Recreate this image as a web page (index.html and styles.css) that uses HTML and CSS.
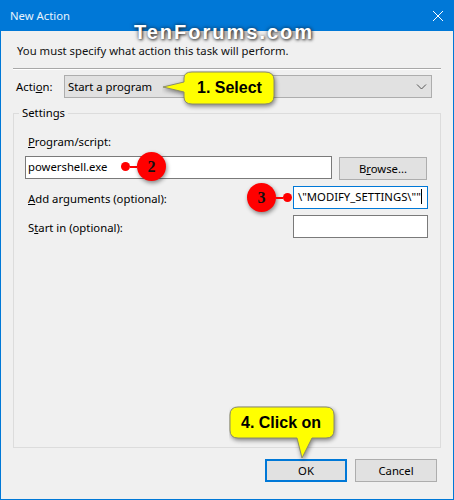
FILE: index.html
```html
<!DOCTYPE html>
<html lang="en">
<head>
  <meta charset="UTF-8" />
  <title>New Action</title>
  <link rel="stylesheet" href="styles.css">
</head>
<body>
  <div class="window">
    <div class="titlebar">
      <span>New Action</span>
      <svg class="close" width="12" height="12" viewBox="0 0 12 12"><path d="M1 1 L11 11 M11 1 L1 11" stroke="#fff" stroke-width="1" fill="none"/></svg>
    </div>

    <div class="content">
      <p class="intro">You must specify what action this task will perform.</p>
      <div class="separator"></div>

      <div class="action-row">
        <label>Acti<u>o</u>n:</label>
        <div class="select">
          <span>Start a program</span>
          <svg width="11" height="6" viewBox="0 0 11 6"><path d="M1 0.5 L5.5 5 L10 0.5" stroke="#555" stroke-width="1" fill="none"/></svg>
        </div>
      </div>

      <fieldset class="settings">
        <legend>Settings</legend>
        <label class="label-program"><u>P</u>rogram/script:</label>
        <div class="program-row">
          <div class="field field-program">powershell.exe</div>
          <button type="button" class="btn btn-browse">B<u>r</u>owse...</button>
        </div>
        <div class="arg-row">
          <label><u>A</u>dd arguments (optional):</label>
          <div class="field field-short field-focus"><span class="caret">\"MODIFY_SETTINGS\""</span></div>
        </div>
        <div class="arg-row">
          <label>S<u>t</u>art in (optional):</label>
          <div class="field field-short"></div>
        </div>
      </fieldset>

      <div class="buttons">
        <button type="button" class="btn btn-ok">OK</button>
        <button type="button" class="btn">Cancel</button>
      </div>
    </div>
  </div>

  <!-- Annotations on top of the dialog -->
  <div class="watermark">TenForums.com</div>

  <div class="callout callout-select">
    <svg width="122" height="42" viewBox="0 0 122 42"><path class="bubble" d="M22 7 Q22 1 30 1 L103 1 Q112 1 112 9 L112 25 Q112 33 103 33 L30 33 Q22 33 22 26 L22 21 L1 16 L22 11 Z"/></svg>
    <span>1. Select</span>
  </div>

  <div class="callout callout-click">
    <svg width="116" height="64" viewBox="0 0 116 64"><path class="bubble" d="M9 1 L97 1 Q105 1 105 9 L105 24 Q105 32 97 32 L83 32 L73 52 L68 32 L9 32 Q1 32 1 24 L1 9 Q1 1 9 1 Z"/></svg>
    <span>4. Click on</span>
  </div>

  <div class="pin pin-two">
    <i class="pin-dot"></i><i class="pin-line"></i><b class="pin-circle">2</b>
  </div>
  <div class="pin pin-three">
    <b class="pin-circle">3</b><i class="pin-line"></i><i class="pin-dot"></i>
  </div>
</body>
</html>
```

FILE: styles.css
```css
* {
  box-sizing: border-box;
  margin: 0;
  padding: 0;
}

body {
  width: 454px;
  height: 500px;
  position: relative;
  overflow: hidden;
  font-family: "Noto Sans", sans-serif;
  font-size: 11.3px;
  color: #000;
  background: #f0f0f0;
}

.window {
  height: 500px;
  display: flex;
  flex-direction: column;
  border: 1px solid #0078d7;
  border-top: none;
}

.titlebar {
  height: 31px;
  flex: none;
  display: flex;
  align-items: center;
  justify-content: space-between;
  padding: 0 9px 0 9px;
  background: #0078d7;
  color: #e8f3fc;
}

.content {
  flex: 1;
  padding: 0 12px;
  display: flex;
  flex-direction: column;
}

.intro {
  margin: 10px 0 0 4px;
  height: 20px;
  line-height: 20px;
  color: #111;
}

.separator {
  margin-top: 7px;
  background: #a8a8a8;
  border-bottom: 1px solid #fff;
  height: 2px;
}

.action-row {
  display: flex;
  align-items: center;
  margin: 5px 0 0 3px;
  height: 23px;
}

.action-row label {
  width: 48px;
}

.select {
  width: 368px;
  height: 23px;
  display: flex;
  align-items: center;
  justify-content: space-between;
  padding: 0 4px 0 3px;
  background: #e1e1e1;
  border: 1px solid #adadad;
}

.settings {
  height: 343px;
  margin-top: 7px;
  padding: 0 12px 0 11px;
  border: 1px solid #dcdcdc;
}

.settings legend {
  margin-left: -6px;
  padding: 0 3px;
  line-height: 16px;
}

.label-program {
  display: block;
  margin: 12px 0 0 3px;
  height: 18px;
  line-height: 18px;
}

.program-row {
  display: flex;
  gap: 7px;
  margin-top: 5px;
}

.field {
  height: 23px;
  padding: 0 2px;
  line-height: 20px;
  background: #fff;
  border: 1px solid #7a7a7a;
  white-space: nowrap;
  overflow: hidden;
}

.field-program {
  width: 307px;
}

.field-short {
  width: 135px;
}

.field-focus {
  border-color: #0078d7;
  padding-left: 4px;
}

.caret {
  border-right: 1px solid #000;
}

.arg-row {
  display: flex;
  justify-content: space-between;
  align-items: center;
  margin-top: 6px;
  padding-left: 3px;
  width: 403px;
}

.arg-row label {
  margin-top: 2px;
}

.btn {
  height: 23px;
  font: inherit;
  color: #000;
  background: #e1e1e1;
  border: 1px solid #adadad;
}

.btn-browse {
  width: 88px;
  margin-top: 1px;
}

.buttons {
  display: flex;
  justify-content: flex-end;
  gap: 8px;
  margin-top: 11px;
  padding-right: 4px;
}

.buttons .btn {
  width: 82px;
}

.buttons .btn-ok {
  border: 2px solid #0078d7;
}

/* Annotations */
.watermark {
  position: absolute;
  left: 134px;
  top: 20px;
  font-family: "Liberation Sans", sans-serif;
  font-size: 20px;
  font-weight: bold;
  letter-spacing: 2px;
  line-height: 24px;
  color: #fff;
  text-shadow: 1px 1px 3px #333, 0 0 4px rgba(0, 0, 0, 0.6);
}

.close {
  display: block;
}

.callout {
  position: absolute;
}

.callout svg {
  display: block;
}

.bubble {
  fill: #ffff00;
  stroke: #8a8a6a;
  stroke-width: 1;
  filter: drop-shadow(1px 2px 2px rgba(0, 0, 0, 0.45));
}

.callout span {
  position: absolute;
  top: 7px;
  font-family: "Liberation Sans", sans-serif;
  font-size: 16px;
  font-weight: bold;
  line-height: 20px;
  white-space: nowrap;
}

.callout-select {
  left: 162px;
  top: 71px;
}

.callout-select span {
  left: 35px;
}

.callout-click {
  left: 229px;
  top: 406px;
}

.callout-click span {
  left: 12px;
}

.pin {
  position: absolute;
  display: flex;
  align-items: center;
}

.pin-two {
  left: 121px;
  top: 152px;
}

.pin-three {
  left: 247px;
  top: 183px;
}

.pin-dot {
  width: 9px;
  height: 9px;
  border-radius: 50%;
  background: #ff0000;
}

.pin-line {
  width: 7px;
  height: 2px;
  background: #ff0000;
}

.pin-circle {
  width: 29px;
  height: 29px;
  border-radius: 50%;
  background: #ff0000;
  text-align: center;
  line-height: 29px;
  font-family: "Liberation Serif", serif;
  font-size: 16px;
  color: #111;
  box-shadow: 1px 2px 4px rgba(0, 0, 0, 0.45);
}
```
